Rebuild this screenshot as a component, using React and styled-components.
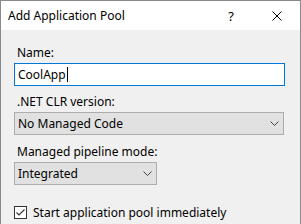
import React from 'react';
import styled, {createGlobalStyle} from 'styled-components';

const GlobalStyle = createGlobalStyle`
    html, body {
        margin: 0;
        padding: 0;
        background: #f0f0f0;
    }
    * {
        box-sizing: border-box;
    }
`;

const FONT = `"Segoe UI", "Noto Sans", "Liberation Sans", sans-serif`;

const Chevron = () => (
  <svg width='9' height='5' viewBox='0 0 9 5'>
    <path d='M0.5 0.5 L4.5 4.5 L8.5 0.5' fill='none' stroke='#444' strokeWidth='1'/>
  </svg>
);

const CloseIcon = () => (
  <svg width='10' height='10' viewBox='0 0 10 10'>
    <path d='M0.5 0.5 L9.5 9.5 M9.5 0.5 L0.5 9.5' fill='none' stroke='#000' strokeWidth='1'/>
  </svg>
);

const CheckMark = () => (
  <svg width='11' height='11' viewBox='0 0 11 11'>
    <path d='M1.5 5.5 L4 8 L9.5 2.5' fill='none' stroke='#333' strokeWidth='1.2'/>
  </svg>
);

const App = () => {
  return (
    <>
      <GlobalStyle/>
      <Window>
        <TitleBar>
          <Title>Add Application Pool</Title>
          <TitleButton>?</TitleButton>
          <TitleButton>
            <CloseIcon/>
          </TitleButton>
        </TitleBar>
        <Body>
          <Label>Name:</Label>
          <TextBox>
            CoolApp<Caret/>
          </TextBox>
          <Label $gap={8}>.NET CLR version:</Label>
          <Dropdown $width={270}>
            <span>No Managed Code</span>
            <Chevron/>
          </Dropdown>
          <Label $gap={9}>Managed pipeline mode:</Label>
          <Dropdown $width={143}>
            <span>Integrated</span>
            <Chevron/>
          </Dropdown>
          <CheckRow>
            <CheckBox>
              <CheckMark/>
            </CheckBox>
            <span>Start application pool immediately</span>
          </CheckRow>
        </Body>
      </Window>
    </>
  );
};

const Window = styled.div`
    width: 301px;
    height: 224px;
    border: 1px solid #8a8a8a;
    border-bottom: none;
    display: flex;
    flex-direction: column;
    font-family: ${FONT};
    font-size: 12px;
    color: #000;
    overflow: hidden;
`;

const TitleBar = styled.div`
    height: 29px;
    background: #fff;
    display: flex;
    align-items: center;
    padding-left: 7px;
`;

const Title = styled.div`
    flex: 1;
    font-size: 12px;
`;

const TitleButton = styled.div`
    width: 46px;
    height: 29px;
    display: flex;
    align-items: center;
    justify-content: center;
    font-size: 13px;
`;

const Body = styled.div`
    flex: 1;
    background: #f0f0f0;
    padding: 15px 15px 0 13px;
    display: flex;
    flex-direction: column;
    align-items: flex-start;
`;

const Label = styled.div`
    line-height: 16px;
    margin-top: ${(p) => p.$gap || 0}px;
    margin-bottom: 2px;
    padding-left: 3px;
`;

const TextBox = styled.div`
    width: 271px;
    height: 23px;
    background: #fff;
    border: 1px solid #0078d7;
    display: flex;
    align-items: center;
    padding-left: 3px;
`;

const Caret = styled.span`
    display: inline-block;
    width: 1px;
    height: 15px;
    background: #000;
    margin-left: 1px;
`;

const Dropdown = styled.div`
    width: ${(p) => p.$width}px;
    height: 23px;
    background: #e1e1e1;
    border: 1px solid #adadad;
    display: flex;
    align-items: center;
    justify-content: space-between;
    padding: 0 4px 0 3px;
`;

const CheckRow = styled.div`
    display: flex;
    align-items: center;
    gap: 6px;
    margin-top: 19px;
`;

const CheckBox = styled.div`
    width: 13px;
    height: 13px;
    border: 1px solid #333;
    background: #fff;
    display: flex;
    align-items: center;
    justify-content: center;
`;

export default App;
